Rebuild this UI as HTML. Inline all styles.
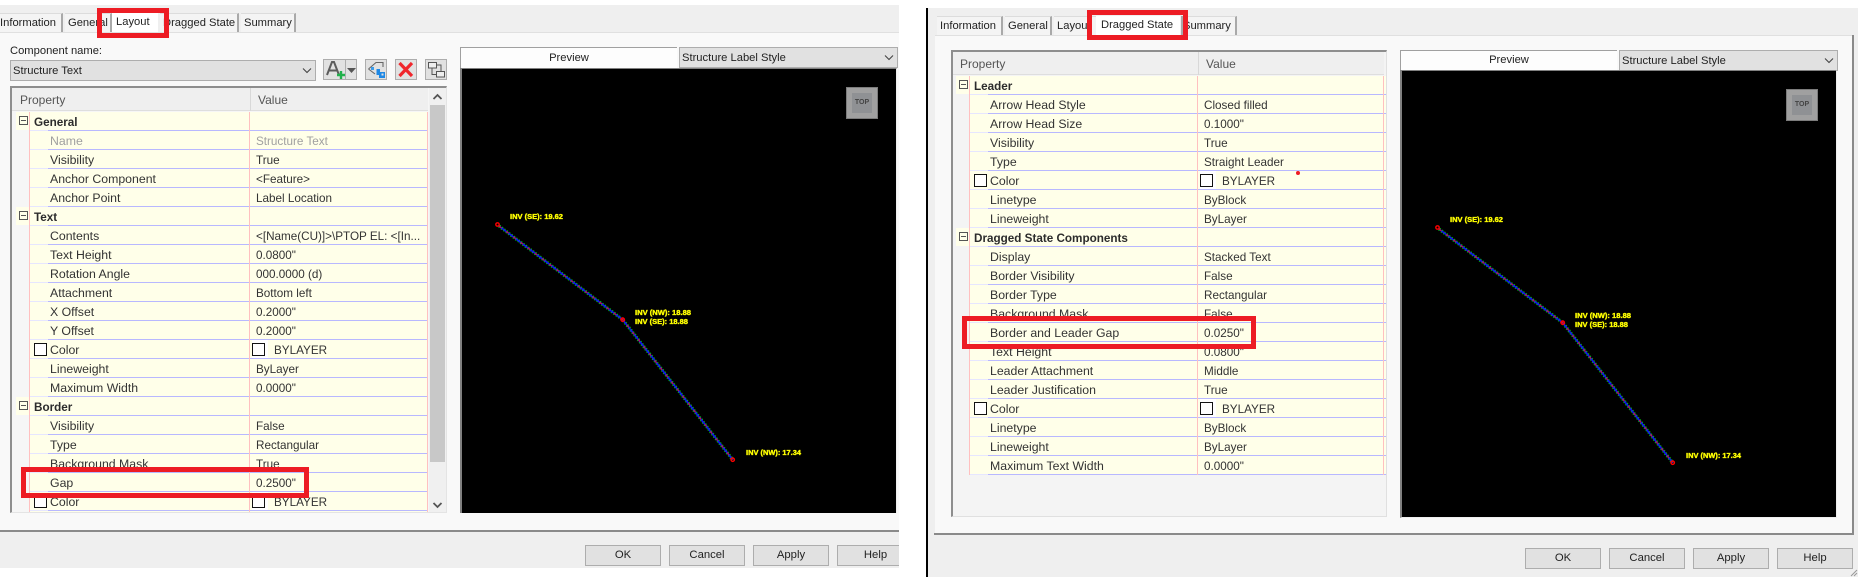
<!DOCTYPE html>
<html>
<head>
<meta charset="utf-8">
<style>
html,body{margin:0;padding:0;background:#fff;}
body{width:1863px;height:577px;position:relative;overflow:hidden;font-family:"Liberation Sans",sans-serif;font-size:12px;color:#333;}
div,span{position:absolute;box-sizing:border-box;white-space:nowrap;}
.tab{height:19px;line-height:18px;background:#f4f4f4;border-right:2px solid #a9a9a9;border-top:1px solid #dcdcdc;color:#222;padding-left:3px;font-size:11.2px;}
.tab.on{background:#fff;border:0;}
.redr{border:5px solid #ed1c24;z-index:5;}
.hd{line-height:25px;color:#555;font-size:12px;}
.t{background:#ffffe9;}
.r{position:relative;height:19px;border-bottom:1px solid #b8b8ff;width:100%;line-height:20px;display:block;}
.r::before{content:"";position:absolute;left:1px;width:18px;bottom:-1px;height:1px;background:#e6e6ff;}
.r .a{left:21px;top:0;font-size:12.3px;}
.r .b{top:1px;font-size:11.7px;}
.r.g .a{left:5px;top:1px;font-weight:bold;color:#2c2c2c;font-size:11.7px;}
.r.dim span{color:#a0a0a0;}
.m{width:1px;top:0;bottom:0;background:#ffc0c0;}
.pm{width:9px;height:9px;border:1px solid #555;background:#ffffe9;z-index:2;}
.pm::after{content:"";position:absolute;left:1px;right:1px;top:3px;height:1px;background:#555;}
.gc{width:14px;height:18px;background:#ffffe9;}
.sw{width:13px;height:13px;border:1px solid #111;background:#fff;top:3px;z-index:2;}
.swb{width:16px;height:18px;background:#fff;top:0;}
.btn{height:21px;width:76px;background:#e1e1e1;border:1px solid #adadad;text-align:center;line-height:19px;color:#222;font-size:11.3px;}
.combo{background:#e1e1e1;border:1px solid #adadad;line-height:20px;color:#222;padding-left:2px;font-size:11.2px;}
.ib{background:#e1e1e1;border:1px solid #adadad;height:21px;}
.top{background:#a0a0a0;border:1px solid #7c7c7c;width:32px;height:32px;}
.top span{left:5px;top:5px;width:20px;height:20px;background:#8f9194;color:#444;font-size:7px;text-align:center;line-height:20px;font-weight:bold;}
svg{position:absolute;overflow:visible;}
.yl{fill:#ff0;stroke:#ff0;stroke-width:.35;font-family:"Liberation Sans",sans-serif;font-size:7px;font-weight:bold;}
</style>
</head>
<body>

<!-- ============ LEFT DIALOG ============ -->
<div style="left:0;top:5px;width:899px;height:563px;background:#efefef;"></div>
<div style="left:0;top:32px;width:899px;height:498px;background:#f9f9f9;border-top:1px solid #e0e0e0;"></div>
<div style="left:0;top:530px;width:899px;height:2px;background:#8a8a8a;"></div>

<div class="tab" style="left:-3px;top:13px;width:66px;">Information</div>
<div class="tab" style="left:65px;top:13px;width:47px;">General</div>
<div class="tab on" style="left:112px;top:13px;width:46px;padding-left:4px;line-height:19px;">Layout</div>
<div class="tab" style="left:160px;top:13px;width:79px;">Dragged State</div>
<div class="tab" style="left:241px;top:13px;width:55px;">Summary</div>
<div class="redr" style="left:97px;top:8px;width:72px;height:30px;"></div>

<div style="left:10px;top:43px;line-height:16px;color:#222;font-size:11.2px;">Component name:</div>
<div class="combo" style="left:10px;top:60px;width:306px;height:21px;">Structure Text</div>
<svg style="left:302px;top:67px" width="12" height="8"><path d="M1 1.5 L5 5.5 L9 1.5" fill="none" stroke="#444" stroke-width="1.1"/></svg>

<!-- toolbar icons -->
<div class="ib" style="left:323px;top:59px;width:34px;"></div>
<div style="left:345px;top:59px;width:1px;height:21px;background:#adadad;"></div>
<svg style="left:323px;top:59px" width="34" height="21">
 <path d="M4 16 L9 3 L11 3 L16 16 M6 11.5 L14 11.5" fill="none" stroke="#5c5c5c" stroke-width="2"/>
 <path d="M14 16 H22 M18 12 V20" stroke="#22b14c" stroke-width="2.4" fill="none"/>
 <path d="M24 9 H33 L28.5 14 Z" fill="#555"/>
</svg>
<div class="ib" style="left:365px;top:59px;width:22px;"></div>
<svg style="left:365px;top:59px" width="22" height="21">
 <path d="M3.5 10 L11 3.5 L18 3.5 L18 8 M3.5 10 L10 15" fill="none" stroke="#666" stroke-width="1.1"/>
 <rect x="6" y="8" width="3" height="3" fill="#3a9be8"/>
 <rect x="11.5" y="10" width="3.5" height="6" fill="#1e88e5"/>
 <path d="M15 13 h5 v6 h-6 v-3 h1 z" fill="#1e88e5"/>
 <rect x="16.5" y="14.5" width="2" height="2" fill="#e1e1e1"/>
</svg>
<div class="ib" style="left:395px;top:59px;width:22px;"></div>
<svg style="left:395px;top:59px" width="22" height="21"><path d="M4.5 4 L17 17 M17 4 L4.5 17" stroke="#f0262c" stroke-width="3.2" fill="none"/></svg>
<div class="ib" style="left:425px;top:59px;width:22px;"></div>
<svg style="left:425px;top:59px" width="22" height="21">
 <rect x="3.5" y="3.5" width="8" height="5.5" fill="#eee" stroke="#555"/>
 <rect x="11.5" y="12.5" width="8" height="5.5" fill="#eee" stroke="#555"/>
 <path d="M7 9 V15.5 H11.5 M11.5 6 H16 V12.5" fill="none" stroke="#555"/>
</svg>

<!-- left table -->
<div style="left:10px;top:86px;width:437px;height:427px;background:#f6f6f6;border-top:2px solid #8e8e8e;border-left:2px solid #8e8e8e;border-right:1px solid #e4e4e4;border-bottom:1px solid #e4e4e4;"></div>
<div style="left:12px;top:88px;width:416px;height:23px;background:#efefef;border-bottom:1px solid #dedede;"></div>
<div style="left:250px;top:88px;width:1px;height:23px;background:#d8d8d8;"></div>
<div class="hd" style="left:20px;top:88px;">Property</div>
<div class="hd" style="left:258px;top:88px;">Value</div>

<div class="gc" style="left:16px;top:112px;"></div><div class="pm" style="left:19px;top:116px;"></div>
<div class="gc" style="left:16px;top:207px;"></div><div class="pm" style="left:19px;top:211px;"></div>
<div class="gc" style="left:16px;top:397px;"></div><div class="pm" style="left:19px;top:401px;"></div>

<div class="t" style="left:29px;top:112px;width:399px;height:400px;overflow:hidden;">
 <div class="r g"><span class="a">General</span></div>
 <div class="r dim"><span class="a">Name</span><span class="b" style="left:227px">Structure Text</span></div>
 <div class="r"><span class="a">Visibility</span><span class="b" style="left:227px">True</span></div>
 <div class="r"><span class="a">Anchor Component</span><span class="b" style="left:227px">&lt;Feature&gt;</span></div>
 <div class="r"><span class="a">Anchor Point</span><span class="b" style="left:227px">Label Location</span></div>
 <div class="r g"><span class="a">Text</span></div>
 <div class="r"><span class="a">Contents</span><span class="b" style="left:227px">&lt;[Name(CU)]&gt;\PTOP EL: &lt;[In...</span></div>
 <div class="r"><span class="a">Text Height</span><span class="b" style="left:227px">0.0800"</span></div>
 <div class="r"><span class="a">Rotation Angle</span><span class="b" style="left:227px">000.0000 (d)</span></div>
 <div class="r"><span class="a">Attachment</span><span class="b" style="left:227px">Bottom left</span></div>
 <div class="r"><span class="a">X Offset</span><span class="b" style="left:227px">0.2000"</span></div>
 <div class="r"><span class="a">Y Offset</span><span class="b" style="left:227px">0.2000"</span></div>
 <div class="r"><span class="sw" style="left:5px"></span><span class="a">Color</span><span class="swb" style="left:223px"></span><span class="sw" style="left:223px"></span><span class="b" style="left:245px">BYLAYER</span></div>
 <div class="r"><span class="a">Lineweight</span><span class="b" style="left:227px">ByLayer</span></div>
 <div class="r"><span class="a">Maximum Width</span><span class="b" style="left:227px">0.0000"</span></div>
 <div class="r g"><span class="a">Border</span></div>
 <div class="r"><span class="a">Visibility</span><span class="b" style="left:227px">False</span></div>
 <div class="r"><span class="a">Type</span><span class="b" style="left:227px">Rectangular</span></div>
 <div class="r"><span class="a">Background Mask</span><span class="b" style="left:227px">True</span></div>
 <div class="r"><span class="a">Gap</span><span class="b" style="left:227px">0.2500"</span></div>
 <div class="r"><span class="sw" style="left:5px"></span><span class="a">Color</span><span class="swb" style="left:223px"></span><span class="sw" style="left:223px"></span><span class="b" style="left:245px">BYLAYER</span></div>
 <div class="m" style="left:0"></div><div class="m" style="left:220px"></div><div class="m" style="left:398px"></div>
</div>

<!-- scrollbar -->
<div style="left:429px;top:88px;width:17px;height:424px;background:#f0f0f0;"></div>
<div style="left:430px;top:105px;width:15px;height:357px;background:#c8c8c8;"></div>
<svg style="left:432px;top:92px" width="12" height="10"><path d="M1.5 7 L5.5 3 L9.5 7" fill="none" stroke="#555" stroke-width="1.8"/></svg>
<svg style="left:432px;top:500px" width="12" height="10"><path d="M1.5 3 L5.5 7 L9.5 3" fill="none" stroke="#555" stroke-width="1.8"/></svg>

<div class="redr" style="left:21px;top:467px;width:288px;height:31px;border-width:5.5px;"></div>

<!-- left preview -->
<div style="left:460px;top:47px;width:217px;height:22px;background:#fdfdfd;border-top:1px solid #a0a0a0;border-left:1px solid #a0a0a0;text-align:center;line-height:20px;color:#222;font-size:11.2px;">Preview</div>
<div class="combo" style="left:679px;top:47px;width:219px;height:21px;">Structure Label Style</div>
<svg style="left:884px;top:54px" width="12" height="8"><path d="M1 1.5 L5 5.5 L9 1.5" fill="none" stroke="#444" stroke-width="1.1"/></svg>
<div style="left:460px;top:68px;width:437px;height:445px;background:#000;border-left:2px solid #808080;border-top:1px solid #808080;border-right:1px solid #eee;"></div>
<div class="top" style="left:846px;top:87px;"><span>TOP</span></div>
<svg style="left:0;top:0" width="1863" height="577">
 <g fill="none">
  <path d="M499 226 L622.7 319.7 L732.7 459.7" stroke="#00d000" stroke-width="3.2" stroke-dasharray="1.5 1.5"/>
  <path d="M499 226 L622.7 319.7 L732.7 459.7" stroke="#1414f0" stroke-width="1.7"/>
  <path d="M499 226 L622.7 319.7 L732.7 459.7" stroke="#e01030" stroke-width="1" stroke-dasharray="3 6"/>
  <circle cx="497.5" cy="224.5" r="1.7" stroke="#f00" stroke-width="1.4"/>
  <circle cx="622.7" cy="319.7" r="1.7" stroke="#f00" stroke-width="1.4"/>
  <circle cx="732.7" cy="459.7" r="1.7" stroke="#f00" stroke-width="1.4"/>
 </g>
 <g class="yl">
  <text x="510" y="219" textLength="53" lengthAdjust="spacingAndGlyphs">INV (SE): 19.62</text>
  <text x="635" y="315" textLength="56" lengthAdjust="spacingAndGlyphs">INV (NW): 18.88</text>
  <text x="635" y="324" textLength="53" lengthAdjust="spacingAndGlyphs">INV (SE): 18.88</text>
  <text x="746" y="455" textLength="55" lengthAdjust="spacingAndGlyphs">INV (NW): 17.34</text>
 </g>
</svg>

<div class="btn" style="left:585px;top:545px;">OK</div>
<div class="btn" style="left:669px;top:545px;">Cancel</div>
<div class="btn" style="left:753px;top:545px;">Apply</div>
<div class="btn" style="left:837px;top:545px;width:62px;border-right:0;padding-right:0;padding-left:14px;">Help</div>

<!-- divider -->
<div style="left:926px;top:8px;width:2px;height:569px;background:#000;"></div>

<!-- ============ RIGHT DIALOG ============ -->
<div style="left:928px;top:8px;width:930px;height:569px;background:#efefef;"></div>
<div style="left:935px;top:35px;width:918px;height:498px;background:#f9f9f9;border-top:1px solid #e0e0e0;"></div>
<div style="left:934px;top:533px;width:920px;height:2px;background:#8a8a8a;"></div>
<div style="left:1852px;top:35px;width:2px;height:500px;background:#8a8a8a;"></div>

<div class="tab" style="left:937px;top:16px;width:66px;">Information</div>
<div class="tab" style="left:1005px;top:16px;width:47px;">General</div>
<div class="tab" style="left:1054px;top:16px;width:46px;">Layout</div>
<div class="tab" style="left:1183px;top:16px;width:54px;padding-left:0;overflow:hidden;">Summary</div>
<div class="tab on" style="left:1096px;top:16px;width:84px;padding-left:5px;">Dragged State</div>
<div style="left:1181px;top:16px;width:2px;height:19px;background:#a9a9a9;"></div>
<div class="redr" style="left:1087px;top:10px;width:101px;height:30px;"></div>

<!-- right table -->
<div style="left:951px;top:50px;width:436px;height:467px;background:#f4f4f4;border-top:2px solid #8e8e8e;border-left:2px solid #8e8e8e;border-right:1px solid #e0e0e0;border-bottom:1px solid #e0e0e0;"></div>
<div style="left:953px;top:52px;width:431px;height:23px;background:#efefef;border-bottom:1px solid #dedede;"></div>
<div style="left:1198px;top:52px;width:1px;height:23px;background:#d8d8d8;"></div>
<div class="hd" style="left:960px;top:52px;">Property</div>
<div class="hd" style="left:1206px;top:52px;">Value</div>

<div class="gc" style="left:956px;top:76px;"></div><div class="pm" style="left:959px;top:80px;"></div>
<div class="gc" style="left:956px;top:228px;"></div><div class="pm" style="left:959px;top:232px;"></div>

<div class="t" style="left:969px;top:76px;width:417px;height:399px;overflow:hidden;">
 <div class="r g"><span class="a">Leader</span></div>
 <div class="r"><span class="a">Arrow Head Style</span><span class="b" style="left:235px">Closed filled</span></div>
 <div class="r"><span class="a">Arrow Head Size</span><span class="b" style="left:235px">0.1000"</span></div>
 <div class="r"><span class="a">Visibility</span><span class="b" style="left:235px">True</span></div>
 <div class="r"><span class="a">Type</span><span class="b" style="left:235px">Straight Leader</span></div>
 <div class="r"><span class="sw" style="left:5px"></span><span class="a">Color</span><span class="swb" style="left:231px"></span><span class="sw" style="left:231px"></span><span class="b" style="left:253px">BYLAYER</span></div>
 <div class="r"><span class="a">Linetype</span><span class="b" style="left:235px">ByBlock</span></div>
 <div class="r"><span class="a">Lineweight</span><span class="b" style="left:235px">ByLayer</span></div>
 <div class="r g"><span class="a">Dragged State Components</span></div>
 <div class="r"><span class="a">Display</span><span class="b" style="left:235px">Stacked Text</span></div>
 <div class="r"><span class="a">Border Visibility</span><span class="b" style="left:235px">False</span></div>
 <div class="r"><span class="a">Border Type</span><span class="b" style="left:235px">Rectangular</span></div>
 <div class="r"><span class="a">Background Mask</span><span class="b" style="left:235px">False</span></div>
 <div class="r"><span class="a">Border and Leader Gap</span><span class="b" style="left:235px">0.0250"</span></div>
 <div class="r"><span class="a">Text Height</span><span class="b" style="left:235px">0.0800"</span></div>
 <div class="r"><span class="a">Leader Attachment</span><span class="b" style="left:235px">Middle</span></div>
 <div class="r"><span class="a">Leader Justification</span><span class="b" style="left:235px">True</span></div>
 <div class="r"><span class="sw" style="left:5px"></span><span class="a">Color</span><span class="swb" style="left:231px"></span><span class="sw" style="left:231px"></span><span class="b" style="left:253px">BYLAYER</span></div>
 <div class="r"><span class="a">Linetype</span><span class="b" style="left:235px">ByBlock</span></div>
 <div class="r"><span class="a">Lineweight</span><span class="b" style="left:235px">ByLayer</span></div>
 <div class="r"><span class="a">Maximum Text Width</span><span class="b" style="left:235px">0.0000"</span></div>
 <div class="m" style="left:0"></div><div class="m" style="left:228px"></div><div class="m" style="left:414px"></div>
 <div style="left:327px;top:95px;width:4px;height:4px;border-radius:2px;background:#ed1c24;"></div>
</div>

<div class="redr" style="left:962px;top:316px;width:294px;height:33px;border-width:5.5px;"></div>

<!-- right preview -->
<div style="left:1400px;top:50px;width:217px;height:21px;background:#fdfdfd;border-top:1px solid #a0a0a0;border-left:1px solid #a0a0a0;text-align:center;line-height:18px;color:#222;font-size:11.2px;">Preview</div>
<div class="combo" style="left:1619px;top:50px;width:219px;height:21px;">Structure Label Style</div>
<svg style="left:1824px;top:57px" width="12" height="8"><path d="M1 1.5 L5 5.5 L9 1.5" fill="none" stroke="#444" stroke-width="1.1"/></svg>
<div style="left:1400px;top:70px;width:437px;height:448px;background:#000;border-left:2px solid #808080;border-top:1px solid #808080;border-right:1px solid #eee;border-bottom:1px solid #eee;"></div>
<div class="top" style="left:1786px;top:89px;"><span>TOP</span></div>
<svg style="left:0;top:0" width="1863" height="577">
 <g fill="none">
  <path d="M1439 229 L1562.7 322.7 L1672.7 462.7" stroke="#00d000" stroke-width="3.2" stroke-dasharray="1.5 1.5"/>
  <path d="M1439 229 L1562.7 322.7 L1672.7 462.7" stroke="#1414f0" stroke-width="1.7"/>
  <path d="M1439 229 L1562.7 322.7 L1672.7 462.7" stroke="#e01030" stroke-width="1" stroke-dasharray="3 6"/>
  <circle cx="1437.5" cy="227.5" r="1.7" stroke="#f00" stroke-width="1.4"/>
  <circle cx="1562.7" cy="322.7" r="1.7" stroke="#f00" stroke-width="1.4"/>
  <circle cx="1672.7" cy="462.7" r="1.7" stroke="#f00" stroke-width="1.4"/>
 </g>
 <g class="yl">
  <text x="1450" y="222" textLength="53" lengthAdjust="spacingAndGlyphs">INV (SE): 19.62</text>
  <text x="1575" y="318" textLength="56" lengthAdjust="spacingAndGlyphs">INV (NW): 18.88</text>
  <text x="1575" y="327" textLength="53" lengthAdjust="spacingAndGlyphs">INV (SE): 18.88</text>
  <text x="1686" y="458" textLength="55" lengthAdjust="spacingAndGlyphs">INV (NW): 17.34</text>
 </g>
 <path d="M1851 576 L1857 570 M1854 576 L1857 573" stroke="#999" fill="none"/>
</svg>

<div class="btn" style="left:1525px;top:548px;">OK</div>
<div class="btn" style="left:1609px;top:548px;">Cancel</div>
<div class="btn" style="left:1693px;top:548px;">Apply</div>
<div class="btn" style="left:1777px;top:548px;">Help</div>

</body>
</html>
